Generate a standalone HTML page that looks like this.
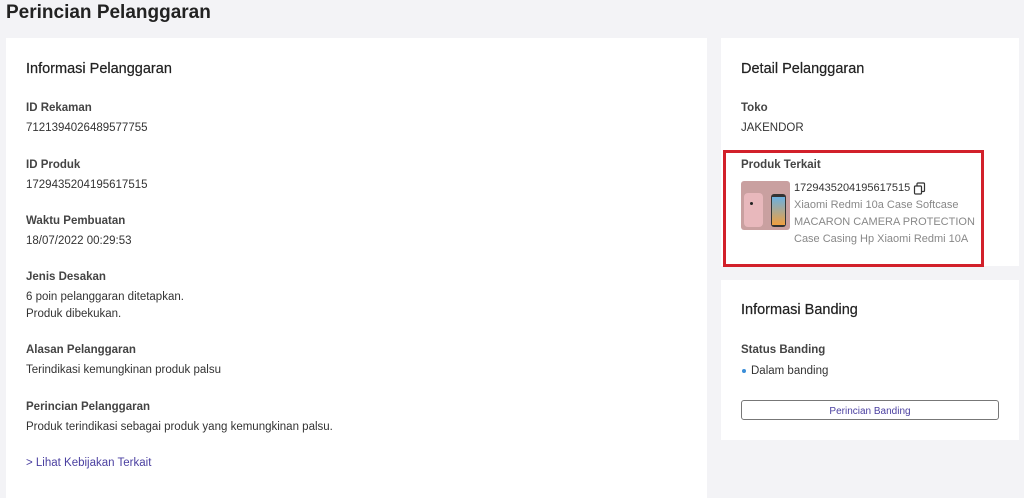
<!DOCTYPE html>
<html><head><meta charset="utf-8"><style>
*{margin:0;padding:0;box-sizing:border-box}
body{width:1024px;height:492px;background:#f3f3f6;font-family:"Liberation Sans",sans-serif;color:#222;position:relative;overflow:hidden}
.a{position:absolute;white-space:nowrap}
.card{position:absolute;background:#fff}
h1{position:absolute;left:6px;top:2px;font-size:19px;font-weight:bold;color:#222}
.t{font-size:14.5px;color:#222;-webkit-text-stroke:0.2px #222}
.l{font-size:11.5px;color:#444;font-weight:bold}
.v{font-size:11.5px;color:#333}
.g{font-size:11px;color:#888}
</style></head><body>
<h1>Perincian Pelanggaran</h1>
<div class="card" style="left:6px;top:38px;width:701px;height:460px"></div>
<div class="card" style="left:721px;top:38px;width:298px;height:228px"></div>
<div class="card" style="left:721px;top:280px;width:298px;height:160px"></div>

<div class="a t" style="left:26px;top:61px">Informasi Pelanggaran</div>
<div class="a l" style="left:26px;top:102px">ID Rekaman</div>
<div class="a v" style="left:26px;top:122px">7121394026489577755</div>
<div class="a l" style="left:26px;top:159px">ID Produk</div>
<div class="a v" style="left:26px;top:179px">1729435204195617515</div>
<div class="a l" style="left:26px;top:215px">Waktu Pembuatan</div>
<div class="a v" style="left:26px;top:235px">18/07/2022 00:29:53</div>
<div class="a l" style="left:26px;top:271px">Jenis Desakan</div>
<div class="a v" style="left:26px;top:291px">6 poin pelanggaran ditetapkan.</div>
<div class="a v" style="left:26px;top:308px">Produk dibekukan.</div>
<div class="a l" style="left:26px;top:344px">Alasan Pelanggaran</div>
<div class="a v" style="left:26px;top:364px">Terindikasi kemungkinan produk palsu</div>
<div class="a l" style="left:26px;top:401px">Perincian Pelanggaran</div>
<div class="a v" style="left:26px;top:421px">Produk terindikasi sebagai produk yang kemungkinan palsu.</div>
<div class="a v" style="left:26px;top:457px;color:#4a3fa0">&gt; Lihat Kebijakan Terkait</div>

<div class="a t" style="left:741px;top:61px">Detail Pelanggaran</div>
<div class="a l" style="left:741px;top:102px">Toko</div>
<div class="a v" style="left:741px;top:122px">JAKENDOR</div>
<div class="a" style="left:723px;top:150px;width:261px;height:117px;border:3px solid #d2202a"></div>
<div class="a l" style="left:741px;top:159px">Produk Terkait</div>
<div class="a" style="left:741px;top:181px;width:49px;height:49px;background:#c9a0a0;border-radius:3px;overflow:hidden">
 <div style="position:absolute;left:3px;top:12px;width:19px;height:34px;background:#e8b8bc;border-radius:4px"></div>
 <div style="position:absolute;left:9px;top:21px;width:3px;height:3px;background:#222;border-radius:50%"></div>
 <div style="position:absolute;left:30px;top:13px;width:15px;height:33px;background:#333;border-radius:3px"></div>
 <div style="position:absolute;left:31px;top:16px;width:13px;height:28px;background:linear-gradient(#6ab0e0,#f0a040)"></div>
</div>
<div class="a" style="left:794px;top:182px;font-size:11px;color:#333">1729435204195617515</div>
<svg class="a" style="left:913px;top:182px" width="13" height="13" viewBox="0 0 13 13" fill="none" stroke="#333" stroke-width="1.2"><rect x="1.5" y="4" width="7" height="8" rx="1"/><path d="M4 4V2a1 1 0 0 1 1-1h5.5a1 1 0 0 1 1 1v6.5a1 1 0 0 1-1 1H8.5"/></svg>
<div class="a g" style="left:794px;top:199px">Xiaomi Redmi 10a Case Softcase</div>
<div class="a g" style="left:794px;top:216px">MACARON CAMERA PROTECTION</div>
<div class="a g" style="left:794px;top:233px">Case Casing Hp Xiaomi Redmi 10A</div>

<div class="a t" style="left:741px;top:302px">Informasi Banding</div>
<div class="a l" style="left:741px;top:344px">Status Banding</div>
<div class="a" style="left:742px;top:369px;width:4px;height:4px;border-radius:50%;background:#3b8ed8"></div>
<div class="a v" style="left:751px;top:365px">Dalam banding</div>
<div class="a" style="left:741px;top:400px;width:258px;height:20px;border:1px solid #777;border-radius:3px;text-align:center;font-size:10px;line-height:19px;padding-top:1px;color:#4a3fa0">Perincian Banding</div>
</body></html>
